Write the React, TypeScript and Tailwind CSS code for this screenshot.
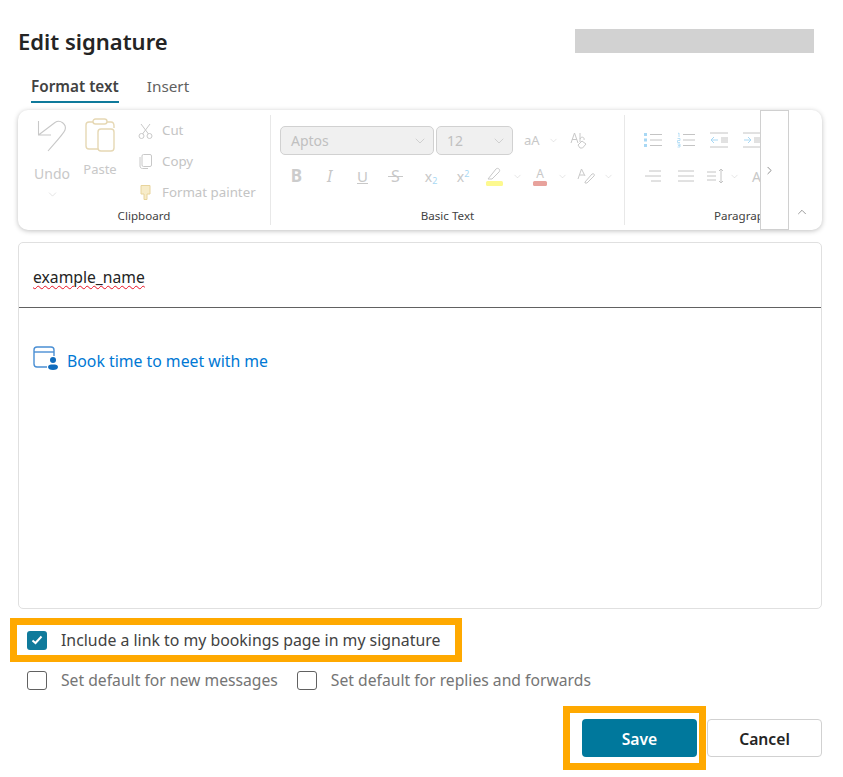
import { ChevronDown, ChevronRight, ChevronUp } from "lucide-react";

const FONT = "font-['Noto_Sans','Open_Sans',sans-serif]";

function Small({ className = "" }: { className?: string }) {
  return <ChevronDown size={11} strokeWidth={1} className={`shrink-0 text-[#c8c8c8] ${className}`} />;
}

function Lines({ ys, x1 = 2, x2 = 16, stroke = "#c4c4c4" }: { ys: number[]; x1?: number; x2?: number; stroke?: string }) {
  return (
    <>
      {ys.map((y) => (
        <path key={y} d={`M${x1} ${y}H${x2}`} stroke={stroke} />
      ))}
    </>
  );
}

function ClipRow({ icon, label }: { icon: React.ReactNode; label: string }) {
  return (
    <div className="flex h-[31px] items-center">
      <span className="flex w-[16px] justify-center">{icon}</span>
      <span className="ml-[9px] text-[13.3px] text-[#c4c4c4]">{label}</span>
    </div>
  );
}

function Cell({ children, w = "w-[33px]" }: { children: React.ReactNode; w?: string }) {
  return <div className={`flex h-[24px] shrink-0 items-center justify-center ${w}`}>{children}</div>;
}

export default function App() {
  return (
    <div className={`relative h-[777px] w-[843px] overflow-hidden bg-white pr-[21px] pl-[18px] ${FONT}`}>
      {/* Header */}
      <div className="flex h-[69px] items-start justify-between pt-[28px]">
        <h1 className="text-[22px] leading-[26px] font-semibold text-[#242424]">Edit signature</h1>
        <div className="mt-[1px] mr-[8px] h-[24px] w-[239px] bg-[#d2d2d2]" />
      </div>

      {/* Tabs */}
      <div className="flex h-[41px] gap-[28px] pl-[13px] text-[15.3px]">
        <div className="h-[34px] border-b-2 border-[#0f7a9b] pt-[6px] leading-[22px] font-semibold text-[#424242]">
          Format text
        </div>
        <div className="pt-[6px] leading-[22px] text-[#616161]">Insert</div>
      </div>

      {/* Ribbon */}
      <div className="relative flex h-[120px] overflow-hidden rounded-[10px] bg-white shadow-[0_1px_5px_rgba(0,0,0,0.25)]">
        {/* Clipboard */}
        <div className="flex w-[253px] shrink-0 flex-col">
          <div className="my-[5px] flex h-[110px] flex-col border-r border-[#e8e8e8]">
            <div className="flex h-[93px] shrink-0">
              <div className="ml-[15px] flex w-[38px] flex-col items-center pt-[3px]">
                <svg width="32" height="34" viewBox="0 0 32 34" fill="none" stroke="#c8c8c8" strokeWidth="1.1">
                  <path d="M2.5 3V17H15M2.5 17L19 4.5C24 1 31 6 29 12C28 15 26 17 12 33" />
                </svg>
                <span className="mt-[12px] text-[14px] leading-[20px] text-[#c8c8c8]">Undo</span>
                <ChevronDown size={13} strokeWidth={1} className="mt-[4px] text-[#cccccc]" />
              </div>
              <div className="ml-[9px] flex w-[40px] flex-col items-center pt-[3px]">
                <svg width="32" height="34" viewBox="0 0 32 34" fill="none" stroke="#e6d8b4" strokeWidth="1.4">
                  <path d="M9 4H5C3 4 2 5 2 7V28C2 30 3 31 5 31H14M23 4H27C29 4 30 5 30 8V10" />
                  <rect x="9" y="1" width="14" height="5" rx="2.5" />
                  <rect x="14" y="11" width="16" height="22" rx="3" />
                </svg>
                <span className="mt-[7px] text-[13px] leading-[20px] text-[#c8c8c8]">Paste</span>
              </div>
              <div className="ml-[17px] flex flex-col">
                <ClipRow
                  label="Cut"
                  icon={
                    <svg width="15" height="16" viewBox="0 0 15 16" fill="none" stroke="#c8c8c8">
                      <circle cx="3.5" cy="13" r="2.5" />
                      <circle cx="11.5" cy="13" r="2.5" />
                      <path d="M3 1L10.5 11M12 1L4.5 11" />
                    </svg>
                  }
                />
                <ClipRow
                  label="Copy"
                  icon={
                    <svg width="13" height="15" viewBox="0 0 13 15" fill="none" stroke="#c8c8c8">
                      <rect x="3" y="0.5" width="9.5" height="12" rx="1.5" />
                      <path d="M1 3V12C1 13.5 2 14.5 3.5 14.5H9" />
                    </svg>
                  }
                />
                <ClipRow
                  label="Format painter"
                  icon={
                    <svg width="11" height="15" viewBox="0 0 11 15">
                      <path d="M1 0.5H10V9H7V14.5H4V9H1Z" fill="#f7ecc9" stroke="#e8d49c" />
                    </svg>
                  }
                />
              </div>
            </div>
            <div className="text-center text-[11.6px] leading-[16px] text-[#424242]">Clipboard</div>
          </div>
        </div>

        {/* Basic Text */}
        <div className="flex w-[354px] shrink-0 flex-col">
          <div className="my-[5px] flex h-[110px] flex-col border-r border-[#e8e8e8]">
            <div className="h-[93px] shrink-0 pl-[9px]">
              <div className="mt-[11px] flex h-[29px] items-center">
                <div className="flex h-[29px] w-[154px] items-center justify-between rounded-[5px] border border-[#d1d1d1] bg-[#f0f0f0] pr-[5px] pl-[10px] text-[14px] text-[#c0c0c0]">
                  Aptos
                  <ChevronDown size={16} strokeWidth={1} />
                </div>
                <div className="ml-[2px] flex h-[29px] w-[77px] items-center justify-between rounded-[5px] border border-[#d1d1d1] bg-[#f0f0f0] pr-[5px] pl-[10px] text-[14px] text-[#c0c0c0]">
                  12
                  <ChevronDown size={16} strokeWidth={1} />
                </div>
                <span className="ml-[11px] text-[13px] text-[#c8c8c8]">aA</span>
                <Small className="ml-[8px]" />
                <svg className="ml-[11px]" width="17" height="17" viewBox="0 0 17 17" fill="none" stroke="#c8c8c8">
                  <path d="M1 11L4.5 1L8 11M2 7.5H7M10 1V10M10 7C11 4 15 5 14 8" />
                  <path d="M8 13L12 9L16 12L12.5 16H10Z" />
                </svg>
              </div>
              <div className="mt-[9px] flex items-center text-[#c8c8c8]">
                <Cell>
                  <span className="text-[17px] font-bold text-[#cccccc]">B</span>
                </Cell>
                <Cell>
                  <span className="text-[16px] text-[#c8c8c8] italic">I</span>
                </Cell>
                <Cell>
                  <span className="text-[15px] underline">U</span>
                </Cell>
                <Cell>
                  <span className="relative text-[16px]">
                    S
                    <span className="absolute top-1/2 -left-[3px] h-px w-[15px] bg-[#c8c8c8]" />
                  </span>
                </Cell>
                <Cell w="w-[38px]">
                  <span className="text-[14px]">
                    x<sub className="text-[9px] text-[#a8d8f4]">2</sub>
                  </span>
                </Cell>
                <Cell w="w-[26px]">
                  <span className="text-[14px]">
                    x<sup className="text-[9px] text-[#a8d8f4]">2</sup>
                  </span>
                </Cell>
                <Cell w="w-[36px]">
                  <svg width="18" height="19" viewBox="0 0 18 19" fill="none">
                    <path d="M3 12L11 2C13 0 16 3 14 5L7 12Z" stroke="#c8c8c8" />
                    <rect x="1" y="14" width="17" height="5" rx="1.5" fill="#fdf98f" />
                  </svg>
                </Cell>
                <Small />
                <Cell w="w-[34px]">
                  <span className="relative flex h-[19px] w-[14px] flex-col items-center">
                    <span className="text-[12px] leading-[14px]">A</span>
                    <span className="absolute bottom-0 h-[5px] w-[14px] rounded-[1.5px] bg-[#e8a29c]" />
                  </span>
                </Cell>
                <Small />
                <Cell w="w-[36px]">
                  <svg width="18" height="16" viewBox="0 0 18 16" fill="none" stroke="#c8c8c8">
                    <path d="M1 11L4.5 1L8 8M2.5 7H7" />
                    <path d="M8 14L15 6C17 5 18 7 17 8L10 15H8Z" />
                  </svg>
                </Cell>
                <Small className="-ml-[1px]" />
              </div>
            </div>
            <div className="text-center text-[11.6px] leading-[16px] text-[#424242]">Basic Text</div>
          </div>
        </div>

        {/* Paragraph, cut off by the overflow button */}
        <div className="flex w-[135px] shrink-0 flex-col overflow-hidden">
          <div className="my-[5px] flex h-[110px] w-[200px] flex-col">
            <div className="h-[93px] shrink-0 pl-[11px]">
              <div className="mt-[15px] flex h-[20px] items-center">
                <Cell>
                  <svg width="18" height="16" viewBox="0 0 18 16" fill="none">
                    <Lines ys={[2.5, 8, 13.5]} x1={6} x2={18} />
                    <rect y="1" width="3" height="3" fill="#a8d8f4" />
                    <rect y="6.5" width="3" height="3" fill="#a8d8f4" />
                    <rect y="12" width="3" height="3" fill="#a8d8f4" />
                  </svg>
                </Cell>
                <Cell>
                  <svg width="18" height="16" viewBox="0 0 18 16" fill="none">
                    <Lines ys={[2.5, 8, 13.5]} x1={6} x2={18} />
                    <path d="M1 1.5L2 1V5M0.5 6.5H3V8.5H0.5V10.5H3M0.5 12H3V15H0.5M1 13.5H3" stroke="#a8d8f4" strokeWidth="0.8" />
                  </svg>
                </Cell>
                <Cell>
                  <svg width="18" height="16" viewBox="0 0 18 16" fill="none">
                    <Lines ys={[1, 15]} x1={0} x2={18} />
                    <Lines ys={[6, 8, 10]} x1={11} x2={18} />
                    <path d="M8 8H1M4 5L1 8L4 11" stroke="#a8d8f4" />
                  </svg>
                </Cell>
                <Cell>
                  <svg width="18" height="16" viewBox="0 0 18 16" fill="none">
                    <Lines ys={[1, 15]} x1={0} x2={18} />
                    <Lines ys={[6, 8, 10]} x1={11} x2={18} />
                    <path d="M1 8H8M5 5L8 8L5 11" stroke="#a8d8f4" />
                  </svg>
                </Cell>
              </div>
              <div className="mt-[14px] flex h-[24px] items-center">
                <Cell>
                  <svg width="16" height="12" viewBox="0 0 16 12" fill="none">
                    <Lines ys={[1]} x1={4} x2={16} />
                    <Lines ys={[6]} x1={0} x2={16} />
                    <Lines ys={[11]} x1={6} x2={16} />
                  </svg>
                </Cell>
                <Cell>
                  <svg width="16" height="12" viewBox="0 0 16 12" fill="none">
                    <Lines ys={[1, 6, 11]} x1={0} x2={16} />
                  </svg>
                </Cell>
                <Cell w="w-[27px]">
                  <svg width="18" height="16" viewBox="0 0 18 16" fill="none">
                    <Lines ys={[4, 8, 12]} x1={0} x2={9} />
                    <path d="M14 1V15M12 3L14 1L16 3M12 13L14 15L16 13" stroke="#c4c4c4" />
                  </svg>
                </Cell>
                <Small />
                <span className="ml-[12px] text-[14px] text-[#c8c8c8]">A</span>
              </div>
            </div>
            <div className="pl-[89px] text-[11.6px] leading-[16px] text-[#424242]">Paragraph</div>
          </div>
        </div>

        {/* Overflow button */}
        <div className="flex h-full w-[29px] shrink-0 items-center justify-center border border-[#d0d0d0] bg-white pr-[10px]">
          <ChevronRight size={13} strokeWidth={1.2} className="shrink-0 text-[#555555]" />
        </div>
        <div className="flex flex-1 items-end justify-center pr-[7px] pb-[11px]">
          <ChevronUp size={14} strokeWidth={1} className="text-[#555555]" />
        </div>
      </div>

      {/* Editor */}
      <div className="mt-[12px] h-[367px] rounded-[5px] border border-[#e0e0e0]">
        <div className="flex h-[65px] items-center border-b border-[#616161] pt-[5px] pl-[14px] text-[15.7px] text-[#242424]">
          <span className="underline decoration-[#e81123] decoration-wavy decoration-1 underline-offset-2">example_name</span>
        </div>
        <div className="mt-[38px] flex items-start pl-[14px]">
          <svg width="25" height="25" viewBox="0 0 25 25" fill="none">
            <rect x="1" y="1" width="20" height="20" rx="3" stroke="#4a8fd4" strokeWidth="1.4" />
            <path d="M1 6H21" stroke="#4a8fd4" strokeWidth="1.4" />
            <rect x="14" y="10" width="11" height="15" fill="#ffffff" />
            <circle cx="20" cy="14" r="3" fill="#0f6cbd" />
            <path d="M15 21C15 19 17 18.5 20 18.5C23 18.5 25 19 25 21C25 23 23 24 20 24C17 24 15 23 15 21Z" fill="#0f6cbd" />
          </svg>
          <span className="mt-[4px] ml-[9px] text-[15.8px] text-[#0078d4]">Book time to meet with me</span>
        </div>
      </div>

      {/* Options */}
      <div className="mt-[9px] -ml-[8px] flex h-[44px] w-[452px] items-center border-[7px] border-[#ffa900] pl-[10px]">
        <span className="flex h-[19px] w-[20px] items-center justify-center rounded-[3px] bg-[#0f7a9b]">
          <svg width="12" height="10" viewBox="0 0 12 10" fill="none" stroke="#ffffff" strokeWidth="2">
            <path d="M1.5 5.5L4.5 8L10.5 1.5" />
          </svg>
        </span>
        <span className="mt-[2px] ml-[14px] text-[15.85px] text-[#424242]">Include a link to my bookings page in my signature</span>
      </div>
      <div className="mt-[8px] flex h-[20px] items-center pl-[9px] text-[15.7px] whitespace-nowrap text-[#757575]">
        <span className="h-[19px] w-[20px] shrink-0 rounded-[3px] border border-[#616161]" />
        <span className="mt-[2px] ml-[14px]">Set default for new messages</span>
        <span className="ml-[19px] h-[19px] w-[20px] shrink-0 rounded-[3px] border border-[#616161]" />
        <span className="mt-[2px] ml-[14px]">Set default for replies and forwards</span>
      </div>

      {/* Buttons */}
      <div className="mt-[16px] flex items-center justify-end gap-[1px]">
        <div className="border-[7px] border-[#ffa900] py-[6px] pr-[2px] pl-[12px]">
          <button className="block h-[38px] w-[115px] rounded-[4px] bg-[#00789c] pt-[3px] text-[15.7px] font-semibold text-white">Save</button>
        </div>
        <button className="h-[38px] w-[115px] rounded-[4px] border border-[#d1d1d1] bg-white pt-[3px] text-[15.7px] font-semibold text-[#242424]">
          Cancel
        </button>
      </div>
    </div>
  );
}
